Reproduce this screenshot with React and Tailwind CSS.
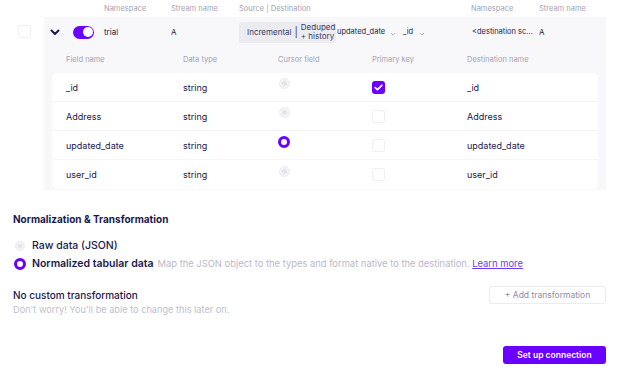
import React from "react";

const F = { fontFamily: "Inter, 'Noto Sans', sans-serif" };

function Chevron({ className = "" }) {
  return (
    <svg width="6" height="4" viewBox="0 0 6 4" className={className}>
      <path d="M1 1l2 2 2-2" fill="none" stroke="#b4b4c2" strokeWidth="1" />
    </svg>
  );
}

function FaintRadio() {
  return (
    <div className="w-[11px] h-[11px] rounded-full bg-[#f4f4f7] border border-[#ececf1] flex items-center justify-center">
      <div className="w-[5px] h-[5px] rounded-full bg-[#e4e4ea]" />
    </div>
  );
}

function OnRadio() {
  return <div className="w-[12px] h-[12px] rounded-full border-[3px] border-[#6a00ff] bg-white" />;
}

function Check({ on }) {
  if (on)
    return (
      <div className="w-[13px] h-[13px] rounded-[3px] bg-[#6a00ff] flex items-center justify-center">
        <svg width="9" height="7" viewBox="0 0 9 7">
          <path d="M1.2 3.6l2.2 2.1L7.8 1.3" fill="none" stroke="white" strokeWidth="1.8" strokeLinecap="round" strokeLinejoin="round" />
        </svg>
      </div>
    );
  return <div className="w-[13px] h-[13px] rounded-[3px] border border-[#efeff3] bg-white" />;
}

const rows = [
  { name: "_id", cursor: false, pk: true },
  { name: "Address", cursor: false, pk: false },
  { name: "updated_date", cursor: true, pk: false },
  { name: "user_id", cursor: false, pk: false },
];

export default function App() {
  return (
    <div style={F} className="w-[637px] h-[378px] bg-white overflow-hidden text-[#1a194d] flex flex-col">
      {/* header */}
      <div className="h-[17px] flex items-center pl-[104px] text-[7.5px] text-[#a3a3b4]">
        <div className="w-[67px]">Namespace</div>
        <div className="w-[68px]">Stream name</div>
        <div className="w-[232px]">Source | Destination</div>
        <div className="w-[68px]">Namespace</div>
        <div>Stream name</div>
      </div>

      <div className="flex">
        <div className="w-[44px] pl-[18px] pt-[8px]">
          <div className="w-[13px] h-[13px] rounded-[3px] border border-[#f0f0f4] bg-white" />
        </div>
        <div className="w-[562px] h-[173px] bg-[#f8f8fa] flex flex-col overflow-hidden">
          {/* stream row */}
          <div className="h-[30px] shrink-0 flex items-center text-[8px]">
            <div className="w-[29px] pl-[6px] flex items-center">
              <svg width="10" height="7" viewBox="0 0 10 7">
                <path d="M1.5 1.5l3.5 3.5 3.5-3.5" fill="none" stroke="#1a194d" strokeWidth="2" strokeLinecap="round" strokeLinejoin="round" />
              </svg>
            </div>
            <div className="w-[31px] flex items-center">
              <div className="w-[21px] h-[13px] rounded-full bg-[#6a00ff] flex items-center justify-end pr-[1.5px]">
                <div className="w-[10px] h-[10px] rounded-full bg-white" />
              </div>
            </div>
            <div className="w-[67px]">trial</div>
            <div className="w-[68px]">A</div>
            <div className="w-[97px] h-[21px] bg-[#ebebf0] rounded-[3px] flex items-center pl-[8px] text-[8px] text-[#3a395f]">
              <span>Incremental</span>
              <span className="mx-[3px] text-[10px] leading-[10px]">|</span>
              <span className="leading-[9px] text-[8px]">Deduped<br />+ history</span>
            </div>
            <div className="w-[67px] flex items-center pl-[1px] text-[7.5px]">
              <span>updated_date</span>
              <Chevron className="ml-[5px] mt-[3px]" />
            </div>
            <div className="w-[68px] flex items-center text-[7.5px]">
              <span>_id</span>
              <Chevron className="ml-[6px] mt-[3px]" />
            </div>
            <div className="w-[68px] text-[7.5px] pl-[1px]">&lt;destination sc...</div>
            <div>A</div>
          </div>
          {/* sub header */}
          <div className="h-[26px] shrink-0 flex items-center pl-[22px] text-[7.5px] text-[#a3a3b4]">
            <div className="w-[117px]">Field name</div>
            <div className="w-[95px]">Data type</div>
            <div className="w-[94px]">Cursor field</div>
            <div className="w-[95px]">Primary key</div>
            <div>Destination name</div>
          </div>
          {/* table */}
          <div className="mx-[8px] bg-white rounded-[6px] flex flex-col shrink-0">
            {rows.map((r, i) => (
              <div
                key={r.name}
                className={`h-[29px] pt-[1px] flex items-center pl-[14px] text-[9px] ${i < rows.length - 1 ? "border-b border-[#f5f5f8]" : ""}`}
              >
                <div className="w-[117px]">{r.name}</div>
                <div className="w-[95px]">string</div>
                <div className="w-[94px] mb-[8px] flex">
                  <div className="w-[12px] flex justify-center">{r.cursor ? <OnRadio /> : <FaintRadio />}</div>
                </div>
                <div className="w-[95px] mb-[1px]">
                  <Check on={r.pk} />
                </div>
                <div>{r.name}</div>
              </div>
            ))}
          </div>
        </div>
      </div>

      {/* normalization */}
      <div className="pl-[13px] mt-[23px] text-[10px] font-bold leading-[12px]">Normalization &amp; Transformation</div>
      <div className="pl-[14px] mt-[14px] flex items-center gap-[6px] h-[14px]">
        <div className="w-[12px] flex justify-center">
          <div className="w-[10px] h-[10px] rounded-full bg-[#f2f2f5] border border-[#ececf1] flex items-center justify-center">
            <div className="w-[4px] h-[4px] rounded-full bg-[#e4e4ea]" />
          </div>
        </div>
        <span className="text-[10.5px] font-medium">Raw data (JSON)</span>
      </div>
      <div className="pl-[14px] mt-[4px] flex items-center gap-[6px] h-[14px] whitespace-nowrap">
        <OnRadio />
        <span className="text-[10.5px] font-semibold">Normalized tabular data</span>
        <span className="text-[9.4px] text-[#b9b9c7] ml-[-2px]">
          Map the JSON object to the types and format native to the destination.{" "}
          <span className="text-[#6a3cf0] underline">Learn more</span>
        </span>
      </div>

      <div className="flex items-start mt-[15px] pl-[13px] pr-[31px] h-[29px]">
        <div className="flex-1">
          <div className="text-[10px] font-medium leading-[12px] mt-[3px]">No custom transformation</div>
          <div className="text-[9.2px] text-[#bfbfcc] mt-[3px] leading-[11px]">Don't worry! You'll be able to change this later on.</div>
        </div>
        <div className="w-[117px] h-[18px] border border-[#ebebf0] rounded-[3px] flex items-center justify-center text-[8.5px] text-[#8e8ea2]">
          + Add transformation
        </div>
      </div>

      <div className="flex justify-end pr-[31px] mt-[31px]">
        <div className="w-[103px] h-[18px] bg-[#6a00ff] rounded-[3px] flex items-center justify-center text-[8.5px] font-semibold text-white">
          Set up connection
        </div>
      </div>
    </div>
  );
}
